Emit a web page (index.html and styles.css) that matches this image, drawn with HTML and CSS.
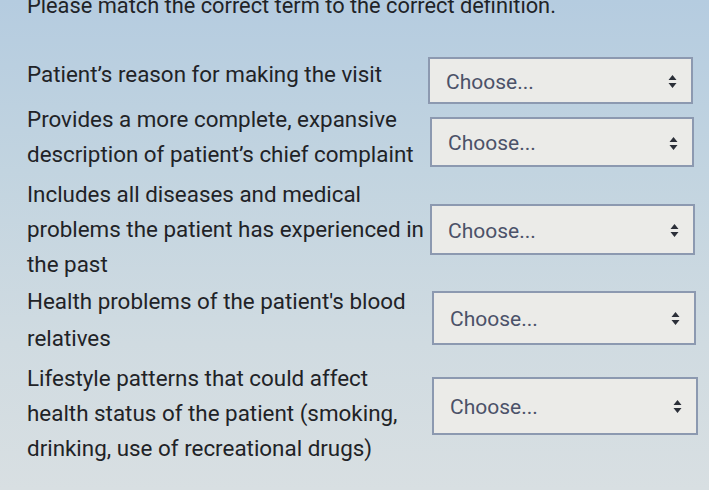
FILE: index.html
```html
<!DOCTYPE html>
<html lang="en">
<head>
    <meta charset="UTF-8">
    <meta name="viewport" content="width=device-width, initial-scale=1.0">
    <title>Match the terms</title>
    <link rel="stylesheet" href="styles.css">
</head>
<body>
    <div class="quiz">
        <p class="prompt">Please match the correct term to the correct definition.</p>

        <div class="matches">
            <div class="row">
                <div class="term">Patient’s reason for making the visit</div>
                <div class="choose"><span>Choose...</span><svg width="9" height="15" viewBox="0 0 9 15"><path d="M4.5 1 L8.5 6 L0.5 6 Z M4.5 14 L8.5 9 L0.5 9 Z" fill="#2b2f38"/></svg></div>
            </div>
            <div class="row">
                <div class="term">Provides a more complete, expansive<br>description of patient’s chief complaint</div>
                <div class="choose"><span>Choose...</span><svg width="9" height="15" viewBox="0 0 9 15"><path d="M4.5 1 L8.5 6 L0.5 6 Z M4.5 14 L8.5 9 L0.5 9 Z" fill="#2b2f38"/></svg></div>
            </div>
            <div class="row">
                <div class="term">Includes all diseases and medical<br>problems the patient has experienced in<br>the past</div>
                <div class="choose"><span>Choose...</span><svg width="9" height="15" viewBox="0 0 9 15"><path d="M4.5 1 L8.5 6 L0.5 6 Z M4.5 14 L8.5 9 L0.5 9 Z" fill="#2b2f38"/></svg></div>
            </div>
            <div class="row">
                <div class="term">Health problems of the patient's blood<br>relatives</div>
                <div class="choose"><span>Choose...</span><svg width="9" height="15" viewBox="0 0 9 15"><path d="M4.5 1 L8.5 6 L0.5 6 Z M4.5 14 L8.5 9 L0.5 9 Z" fill="#2b2f38"/></svg></div>
            </div>
            <div class="row">
                <div class="term">Lifestyle patterns that could affect<br>health status of the patient (smoking,<br>drinking, use of recreational drugs)</div>
                <div class="choose"><span>Choose...</span><svg width="9" height="15" viewBox="0 0 9 15"><path d="M4.5 1 L8.5 6 L0.5 6 Z M4.5 14 L8.5 9 L0.5 9 Z" fill="#2b2f38"/></svg></div>
            </div>
        </div>
    </div>
</body>
</html>
```

FILE: styles.css
```css
html, body {
    height: 100%;
}
body {
    margin: 0;
    font-family: Roboto, 'Liberation Sans', sans-serif;
    color: #1f2327;
    background: linear-gradient(180deg, #b5cce0 0%, #c2d4e0 35%, #d0dbe1 70%, #d8dfe2 100%);
    overflow: hidden;
}
.quiz {
    padding: 0 8px 0 27px;
}
.prompt {
    margin: -6px 0 0;
    font-size: 21.8px;
    line-height: 24px;
}
.matches {
    margin-top: 39px;
    display: flex;
    flex-direction: column;
}
.row {
    display: flex;
    align-items: center;
}
.term {
    width: 401px;
    font-size: 22.4px;
    line-height: 35px;
    white-space: nowrap;
}
.choose {
    width: 265px;
    height: 47px;
    box-sizing: border-box;
    border: 2px solid #8c99b0;
    background-color: #ebebe8;
    display: flex;
    align-items: center;
    justify-content: space-between;
    padding: 2px 14px 0 16px;
    font-size: 21px;
    color: #4b5269;
}
.row:nth-child(1) .term {
    align-self: flex-start;
}
.row:nth-child(2) {
    margin-top: -2px;
}
.row:nth-child(2) .choose {
    height: 50px;
    width: 264px;
    margin: 10px 0 0 2px;
}
.row:nth-child(3) {
    margin-top: 5px;
}
.row:nth-child(3) .choose {
    height: 51px;
    margin-left: 2px;
}
.row:nth-child(4) {
    margin-top: 1px;
}
.row:nth-child(4) .term {
    line-height: 37px;
}
.row:nth-child(4) .choose {
    height: 54px;
    width: 264px;
    margin: -5px 0 0 4px;
}
.row:nth-child(5) {
    margin-top: 4px;
}
.row:nth-child(5) .choose {
    height: 58px;
    width: 266px;
    margin: -16px 0 0 4px;
}
```
